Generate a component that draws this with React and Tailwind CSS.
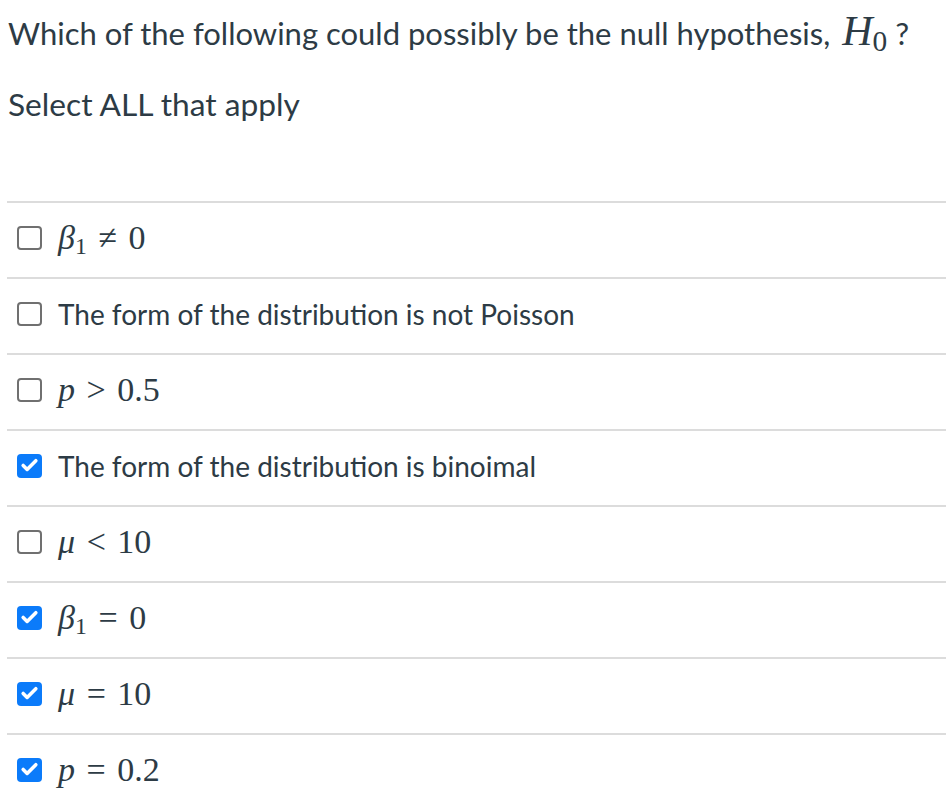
import { Check } from "lucide-react";

const mathFont = { fontFamily: '"Liberation Serif", "DejaVu Serif", serif' };

const Op = ({ children }) => <span className="mx-[0.34em]">{children}</span>;
const Sub = ({ children }) => (
  <span className="relative top-[0.22em] text-[0.7em] leading-none">{children}</span>
);

const options = [
  { id: 1, checked: false, math: true, content: <><i>β</i><Sub>1</Sub><Op>≠</Op>0</> },
  { id: 2, checked: false, math: false, content: "The form of the distribution is not Poisson" },
  { id: 3, checked: false, math: true, content: <><i>p</i><Op>&gt;</Op>0.5</> },
  { id: 4, checked: true, math: false, content: "The form of the distribution is binoimal" },
  { id: 5, checked: false, math: true, content: <><i>μ</i><Op>&lt;</Op>10</> },
  { id: 6, checked: true, math: true, content: <><i>β</i><Sub>1</Sub><Op>=</Op>0</> },
  { id: 7, checked: true, math: true, content: <><i>μ</i><Op>=</Op>10</> },
  { id: 8, checked: true, math: true, content: <><i>p</i><Op>=</Op>0.2</> },
];

const CheckBox = ({ checked }) =>
  checked ? (
    <span className="flex h-[24px] w-[25px] shrink-0 items-center justify-center rounded-[4px] bg-[#0b7bfa]">
      <Check className="h-[19px] w-[19px] text-white" strokeWidth={4.5} />
    </span>
  ) : (
    <span className="h-[24px] w-[25px] shrink-0 rounded-[4px] border-2 border-[#707070] bg-white" />
  );

export default function App() {
  return (
    <div className="min-h-screen bg-white text-[#2d3b45]" style={{ fontFamily: 'Lato, "Open Sans", sans-serif' }}>
      <div className="pl-[8px] pt-[13px]">
        <h1 className="text-[31px] leading-[40px]">
          Which of the following could possibly be the null hypothesis,{" "}
          <span className="ml-[4px] mr-[8px] text-[42px] leading-[0]" style={mathFont}>
            <i>H</i>
            <Sub>0</Sub>
          </span>
          ?
        </h1>
        <p className="mt-[31px] text-[31.7px] leading-[40px]">Select ALL that apply</p>
      </div>

      <div className="ml-[7px] mt-[77px]">
        {options.map((opt) => (
          <div
            key={opt.id}
            className="flex h-[76px] items-center gap-[16px] border-t-2 border-[#dcdcdc] pb-[5px] pl-[10px]"
          >
            <CheckBox checked={opt.checked} />
            {opt.math ? (
              <span className="text-[34px] leading-none" style={mathFont}>
                {opt.content}
              </span>
            ) : (
              <span className="text-[28px]">{opt.content}</span>
            )}
          </div>
        ))}
      </div>
    </div>
  );
}
